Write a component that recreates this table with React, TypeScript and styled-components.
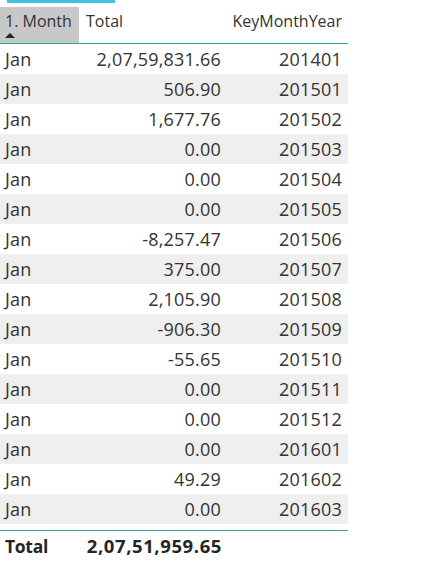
import React from "react";
import styled, { createGlobalStyle } from "styled-components";

const Global = createGlobalStyle`
  html, body { margin: 0; padding: 0; background: #ffffff; }
  body { font-family: "Open Sans", "Noto Sans", sans-serif; color: #333333; }
`;

const Page = styled.div`
  width: 438px;
  height: 563px;
  display: flex;
  flex-direction: column;
`;

const TopBar = styled.div`
  margin-left: 7px;
  width: 108px;
  height: 3px;
  background: #3cc3df;
`;

const Table = styled.div`
  margin-top: 4px;
  width: 348px;
  display: flex;
  flex-direction: column;
`;

const cols = "79px 148px 121px";

const HeaderRow = styled.div`
  display: grid;
  grid-template-columns: ${cols};
  height: 36px;
  border-bottom: 1px solid #30a6a0;
`;

const HeaderCell = styled.div<{ $align?: "left" | "right"; $sorted?: boolean; $pl?: number }>`
  position: relative;
  background: ${(p) => (p.$sorted ? "#c8c8c8" : "transparent")};
  font-size: 16px;
  line-height: 28px;
  padding: 0 6px 0 ${(p) => p.$pl ?? 5}px;
  text-align: ${(p) => p.$align ?? "left"};
  white-space: nowrap;
  color: #333333;
`;

const SortArrow = styled.span`
  position: absolute;
  left: 5px;
  top: 26px;
  width: 0;
  height: 0;
  border-left: 5px solid transparent;
  border-right: 5px solid transparent;
  border-bottom: 5px solid #252525;
`;

const Row = styled.div<{ $alt: boolean }>`
  display: grid;
  grid-template-columns: ${cols};
  height: 30px;
  background: ${(p) => (p.$alt ? "#efefef" : "#ffffff")};
`;

const Cell = styled.div<{ $align?: "left" | "right" }>`
  font-size: 18px;
  letter-spacing: 0.2px;
  line-height: 30px;
  padding: 0 6px 0 5px;
  text-align: ${(p) => p.$align ?? "left"};
  white-space: nowrap;
`;

const TotalRow = styled.div`
  display: grid;
  grid-template-columns: ${cols};
  margin-top: 6px;
  border-top: 1px solid #30a6a0;
  height: 31px;
`;

const TotalCell = styled(Cell)<{ $label?: boolean }>`
  font-size: ${(p) => (p.$label ? "17.5px" : "18.5px")};
  letter-spacing: ${(p) => (p.$label ? "-0.3px" : "0.6px")};
  font-weight: 700;
  color: #252525;
  padding-right: 5px;
`;

const data: [string, string][] = [
  ["2,07,59,831.66", "201401"],
  ["506.90", "201501"],
  ["1,677.76", "201502"],
  ["0.00", "201503"],
  ["0.00", "201504"],
  ["0.00", "201505"],
  ["-8,257.47", "201506"],
  ["375.00", "201507"],
  ["2,105.90", "201508"],
  ["-906.30", "201509"],
  ["-55.65", "201510"],
  ["0.00", "201511"],
  ["0.00", "201512"],
  ["0.00", "201601"],
  ["49.29", "201602"],
  ["0.00", "201603"],
];

export default function App() {
  return (
    <Page>
      <Global />
      <TopBar />
      <Table>
        <HeaderRow>
          <HeaderCell $sorted>
            1. Month
            <SortArrow />
          </HeaderCell>
          <HeaderCell $pl={7}>Total</HeaderCell>
          <HeaderCell $align="right">KeyMonthYear</HeaderCell>
        </HeaderRow>
        {data.map(([total, key], i) => (
          <Row key={key} $alt={i % 2 === 1}>
            <Cell>Jan</Cell>
            <Cell $align="right">{total}</Cell>
            <Cell $align="right">{key}</Cell>
          </Row>
        ))}
        <TotalRow>
          <TotalCell $label>Total</TotalCell>
          <TotalCell $align="right">2,07,51,959.65</TotalCell>
          <TotalCell $align="right"></TotalCell>
        </TotalRow>
      </Table>
    </Page>
  );
}
